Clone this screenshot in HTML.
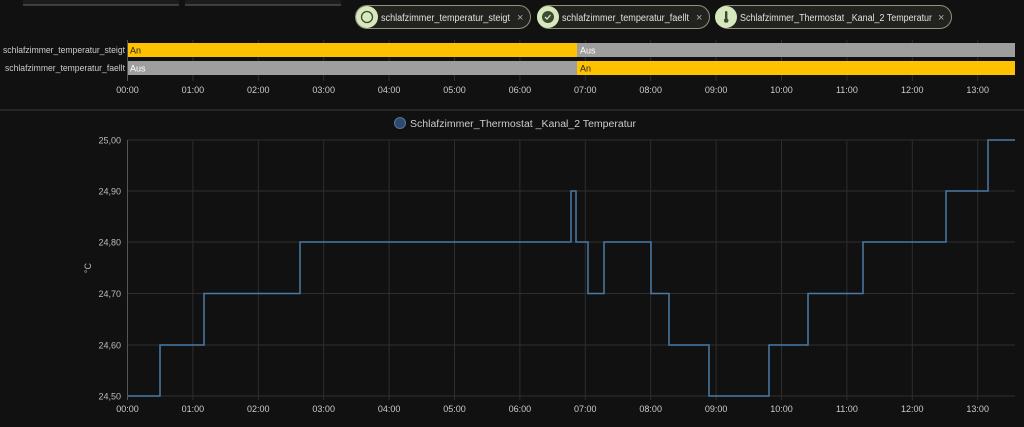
<!DOCTYPE html>
<html><head><meta charset="utf-8"><style>
html,body{margin:0;padding:0;background:#111;width:1024px;height:427px;overflow:hidden;font-family:"Liberation Sans",sans-serif}
svg text{font-family:"Liberation Sans",sans-serif}
</style></head><body>
<svg width="1024" height="427" viewBox="0 0 1024 427" xmlns="http://www.w3.org/2000/svg">
<rect width="1024" height="427" fill="#111"/>
<rect x="23" y="0" width="156" height="5" fill="#1c1c1c"/><line x1="23" y1="5" x2="179" y2="5" stroke="#666"/>
<rect x="185" y="0" width="156" height="5" fill="#1c1c1c"/><line x1="185" y1="5" x2="341" y2="5" stroke="#666"/>
<g font-size="10" fill="#e1e1e1">
<rect x="355.5" y="5.5" width="175" height="23" rx="11.5" fill="#22231e" stroke="#8e937a"/>
<circle cx="367" cy="17" r="11" fill="#d8e8bd"/><circle cx="367" cy="17" r="5.5" fill="none" stroke="#3e4a34" stroke-width="1.3"/>
<text x="381" y="21" textLength="129" lengthAdjust="spacingAndGlyphs">schlafzimmer_temperatur_steigt</text><text x="517" y="21" fill="#aaa" font-size="11">×</text>
<rect x="537.5" y="5.5" width="172" height="23" rx="11.5" fill="#22231e" stroke="#8e937a"/>
<circle cx="548" cy="17" r="11" fill="#d8e8bd"/><circle cx="548" cy="17" r="6" fill="#3e4a34"/>
<path d="M545 17l2 2 3.5-4" stroke="#d8e8bd" stroke-width="1.3" fill="none"/>
<text x="562" y="21" textLength="127" lengthAdjust="spacingAndGlyphs">schlafzimmer_temperatur_faellt</text><text x="696" y="21" fill="#aaa" font-size="11">×</text>
<rect x="716.5" y="5.5" width="235" height="23" rx="11.5" fill="#22231e" stroke="#8e937a"/>
<circle cx="726" cy="17" r="11" fill="#d8e8bd"/>
<rect x="725" y="11" width="2.4" height="8" rx="1.2" fill="#3e4a34"/><circle cx="726.2" cy="20.5" r="2.3" fill="#3e4a34"/>
<text x="740" y="21" textLength="192" lengthAdjust="spacingAndGlyphs">Schlafzimmer_Thermostat _Kanal_2 Temperatur</text><text x="938" y="21" fill="#aaa" font-size="11">×</text>
</g>
<g stroke="#2e2e2e">
<line x1="192.9" y1="40" x2="192.9" y2="81"/><line x1="258.3" y1="40" x2="258.3" y2="81"/><line x1="323.7" y1="40" x2="323.7" y2="81"/><line x1="389.1" y1="40" x2="389.1" y2="81"/><line x1="454.5" y1="40" x2="454.5" y2="81"/><line x1="519.9" y1="40" x2="519.9" y2="81"/><line x1="585.3" y1="40" x2="585.3" y2="81"/><line x1="650.7" y1="40" x2="650.7" y2="81"/><line x1="716.1" y1="40" x2="716.1" y2="81"/><line x1="781.5" y1="40" x2="781.5" y2="81"/><line x1="846.9" y1="40" x2="846.9" y2="81"/><line x1="912.3" y1="40" x2="912.3" y2="81"/><line x1="977.7" y1="40" x2="977.7" y2="81"/>
</g>
<line x1="127.5" y1="40" x2="127.5" y2="81" stroke="#555"/>
<rect x="128" y="43" width="449" height="14" fill="#fec200"/>
<rect x="577" y="43" width="438" height="14" fill="#9e9e9e"/>
<rect x="128" y="61" width="449" height="14" fill="#9e9e9e"/>
<rect x="577" y="61" width="438" height="14" fill="#fec200"/>
<g font-size="9">
<text x="130" y="53.5" fill="#222">An</text><text x="580" y="53.5" fill="#fff">Aus</text>
<text x="130" y="71.5" fill="#fff">Aus</text><text x="580" y="71.5" fill="#222">An</text>
<text x="3" y="53" fill="#ccc" textLength="122" lengthAdjust="spacingAndGlyphs">schlafzimmer_temperatur_steigt</text>
<text x="5" y="71" fill="#ccc" textLength="120" lengthAdjust="spacingAndGlyphs">schlafzimmer_temperatur_faellt</text>
</g>
<g font-size="9" fill="#ccc" text-anchor="middle">
<text x="127.5" y="93">00:00</text><text x="192.9" y="93">01:00</text><text x="258.3" y="93">02:00</text><text x="323.7" y="93">03:00</text><text x="389.1" y="93">04:00</text><text x="454.5" y="93">05:00</text><text x="519.9" y="93">06:00</text><text x="585.3" y="93">07:00</text><text x="650.7" y="93">08:00</text><text x="716.1" y="93">09:00</text><text x="781.5" y="93">10:00</text><text x="846.9" y="93">11:00</text><text x="912.3" y="93">12:00</text><text x="977.7" y="93">13:00</text>
</g>
<line x1="0" y1="110" x2="1024" y2="110" stroke="#2f2f2f" stroke-width="1.5"/>
<circle cx="400" cy="123" r="5.5" fill="#2e4a6a" stroke="#4a78a8"/>
<text x="410" y="127" font-size="10" fill="#ccc" textLength="226" lengthAdjust="spacingAndGlyphs">Schlafzimmer_Thermostat _Kanal_2 Temperatur</text>
<g stroke="#2e2e2e">
<line x1="127" y1="140" x2="1015" y2="140"/><line x1="127" y1="191" x2="1015" y2="191"/><line x1="127" y1="242" x2="1015" y2="242"/><line x1="127" y1="293.5" x2="1015" y2="293.5"/><line x1="127" y1="345" x2="1015" y2="345"/><line x1="127" y1="396" x2="1015" y2="396"/>
<line x1="192.9" y1="140" x2="192.9" y2="400"/><line x1="258.3" y1="140" x2="258.3" y2="400"/><line x1="323.7" y1="140" x2="323.7" y2="400"/><line x1="389.1" y1="140" x2="389.1" y2="400"/><line x1="454.5" y1="140" x2="454.5" y2="400"/><line x1="519.9" y1="140" x2="519.9" y2="400"/><line x1="585.3" y1="140" x2="585.3" y2="400"/><line x1="650.7" y1="140" x2="650.7" y2="400"/><line x1="716.1" y1="140" x2="716.1" y2="400"/><line x1="781.5" y1="140" x2="781.5" y2="400"/><line x1="846.9" y1="140" x2="846.9" y2="400"/><line x1="912.3" y1="140" x2="912.3" y2="400"/><line x1="977.7" y1="140" x2="977.7" y2="400"/>
</g>
<line x1="127.5" y1="140" x2="127.5" y2="400" stroke="#555"/>
<g font-size="9" fill="#bbb" text-anchor="end">
<text x="121" y="143.5">25,00</text><text x="121" y="194.5">24,90</text><text x="121" y="245.5">24,80</text><text x="121" y="297">24,70</text><text x="121" y="348.5">24,60</text><text x="121" y="399.5">24,50</text>
</g>
<text x="91" y="268" font-size="9" fill="#bbb" transform="rotate(-90 91 268)" text-anchor="middle">°C</text>
<g font-size="9" fill="#ccc" text-anchor="middle">
<text x="127.5" y="412">00:00</text><text x="192.9" y="412">01:00</text><text x="258.3" y="412">02:00</text><text x="323.7" y="412">03:00</text><text x="389.1" y="412">04:00</text><text x="454.5" y="412">05:00</text><text x="519.9" y="412">06:00</text><text x="585.3" y="412">07:00</text><text x="650.7" y="412">08:00</text><text x="716.1" y="412">09:00</text><text x="781.5" y="412">10:00</text><text x="846.9" y="412">11:00</text><text x="912.3" y="412">12:00</text><text x="977.7" y="412">13:00</text>
</g>
<polyline fill="none" stroke="#4a7aa8" stroke-width="1.5" points="128,396 160,396 160,345 204,345 204,293.5 300,293.5 300,242 571,242 571,191 576,191 576,242 588,242 588,293.5 604,293.5 604,242 651,242 651,293.5 669,293.5 669,345 709,345 709,396 769,396 769,345 808,345 808,293.5 863,293.5 863,242 946,242 946,191 988,191 988,140 1015,140"/>
</svg>
</body></html>
